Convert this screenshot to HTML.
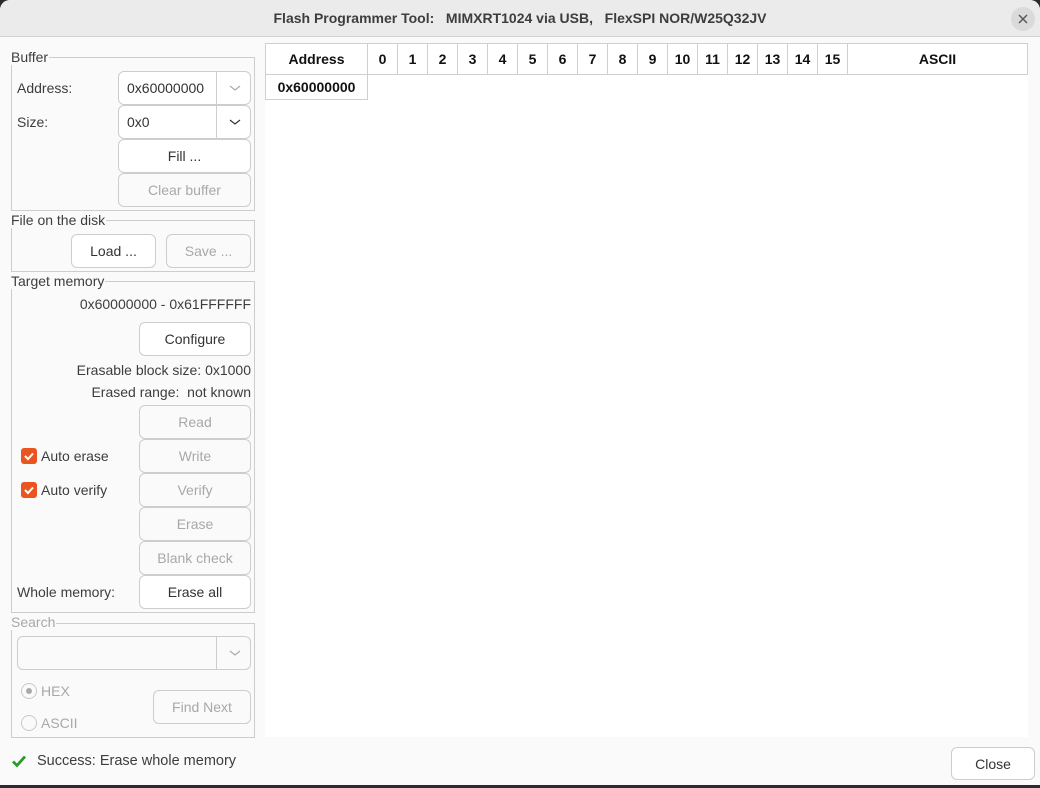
<!DOCTYPE html>
<html><head><meta charset="utf-8"><style>
*{box-sizing:border-box;margin:0;padding:0}
body{width:1040px;height:788px;background:#2b2b2b;position:relative;overflow:hidden;font-family:"Liberation Sans",sans-serif;font-size:14px;color:#333}
.win{position:absolute;left:0;top:0;width:1040px;height:785px;background:#fafafa;border-radius:10px 10px 0 0;overflow:hidden}
.hdr{position:absolute;left:0;top:0;width:1040px;height:37px;background:#ebebeb;border-bottom:1px solid #cfcfcf;text-align:center;line-height:37px;font-weight:bold;font-size:14px;color:#3d3d3d}
.x{position:absolute;left:1011px;top:7px;width:24px;height:24px;border-radius:12px;background:#dadada}
.a{position:absolute}
.grp{position:absolute;border:1px solid #cdcdcd;left:11px;width:244px}
.gt{position:absolute;left:11px;font-size:14px;color:#3d3d3d;background:#fafafa;padding-right:1px;line-height:16px}
.btn{position:absolute;border:1px solid #cdcdcd;border-radius:6px;background:#fff;text-align:center;font-size:14px;color:#333;height:34px;line-height:32px}
.dis{color:#a8a8a8;background:#fafafa}
.lbl{position:absolute;font-size:14px;color:#3d3d3d;line-height:16px}
.r{text-align:right}
.cb{position:absolute;width:16px;height:16px;border-radius:3px;background:#e95420}
.cb svg{position:absolute;left:0;top:0}
.tbl{position:absolute;left:265px;top:43px;width:763px;height:694px;background:#fff}
.th{position:absolute;top:0;height:32px;border-right:1px solid #cfcfcf;border-bottom:1px solid #cfcfcf;border-top:1px solid #cfcfcf;text-align:center;line-height:30px;font-weight:bold;color:#111;font-size:14px}
.sep{position:absolute;top:0;width:1px;height:32px;background:#cdcdcd}
.chev{position:absolute;top:12px}
</style></head><body>
<div class="win">
<div class="hdr">Flash Programmer Tool:&nbsp;&nbsp; MIMXRT1024 via USB,&nbsp;&nbsp; FlexSPI NOR/W25Q32JV<div class="x"><svg class="a" style="left:7px;top:7px" width="10" height="10"><path d="M1 1l8 8M9 1l-8 8" stroke="#555" stroke-width="1.4"/></svg></div></div>

<div class="tbl">
<div class="th" style="left:0;width:103px;border-left:1px solid #cfcfcf">Address</div>
<div class="th" style="left:103px;width:30px">0</div>
<div class="th" style="left:133px;width:30px">1</div>
<div class="th" style="left:163px;width:30px">2</div>
<div class="th" style="left:193px;width:30px">3</div>
<div class="th" style="left:223px;width:30px">4</div>
<div class="th" style="left:253px;width:30px">5</div>
<div class="th" style="left:283px;width:30px">6</div>
<div class="th" style="left:313px;width:30px">7</div>
<div class="th" style="left:343px;width:30px">8</div>
<div class="th" style="left:373px;width:30px">9</div>
<div class="th" style="left:403px;width:30px">10</div>
<div class="th" style="left:433px;width:30px">11</div>
<div class="th" style="left:463px;width:30px">12</div>
<div class="th" style="left:493px;width:30px">13</div>
<div class="th" style="left:523px;width:30px">14</div>
<div class="th" style="left:553px;width:30px">15</div>
<div class="th" style="left:583px;width:180px">ASCII</div>
<div class="th" style="left:0;top:32px;width:103px;height:25px;line-height:24px;border-top:none;border-left:1px solid #cfcfcf">0x60000000</div>
</div>

<!-- Buffer -->
<div class="grp" style="top:57px;height:154px"></div>
<div class="gt" style="top:49px">Buffer</div>
<div class="lbl" style="left:17px;top:80px">Address:</div>
<div class="btn" style="left:118px;top:71px;width:133px;text-align:left;padding-left:8px">0x60000000<div class="sep" style="left:97px"></div><svg class="chev" style="left:110px" width="12" height="8"><path d="M1 2l5 4 5-4" stroke="#aaa" stroke-width="1.2" fill="none"/></svg></div>
<div class="lbl" style="left:17px;top:114px">Size:</div>
<div class="btn" style="left:118px;top:105px;width:133px;text-align:left;padding-left:8px">0x0<div class="sep" style="left:97px"></div><svg class="chev" style="left:110px" width="12" height="8"><path d="M1 2l5 4 5-4" stroke="#333" stroke-width="1.2" fill="none"/></svg></div>
<div class="btn" style="left:118px;top:139px;width:133px">Fill ...</div>
<div class="btn dis" style="left:118px;top:173px;width:133px">Clear buffer</div>

<!-- File -->
<div class="grp" style="top:220px;height:52px"></div>
<div class="gt" style="top:212px">File on the disk</div>
<div class="btn" style="left:71px;top:234px;width:85px">Load ...</div>
<div class="btn dis" style="left:166px;top:234px;width:85px">Save ...</div>

<!-- Target -->
<div class="grp" style="top:281px;height:332px"></div>
<div class="gt" style="top:273px">Target memory</div>
<div class="lbl r" style="left:20px;width:231px;top:296px">0x60000000 - 0x61FFFFFF</div>
<div class="btn" style="left:139px;top:322px;width:112px">Configure</div>
<div class="lbl r" style="left:20px;width:231px;top:362px">Erasable block size: 0x1000</div>
<div class="lbl r" style="left:20px;width:231px;top:384px">Erased range:&nbsp; not known</div>
<div class="btn dis" style="left:139px;top:405px;width:112px">Read</div>
<div class="btn dis" style="left:139px;top:439px;width:112px">Write</div>
<div class="btn dis" style="left:139px;top:473px;width:112px">Verify</div>
<div class="btn dis" style="left:139px;top:507px;width:112px">Erase</div>
<div class="btn dis" style="left:139px;top:541px;width:112px">Blank check</div>
<div class="btn" style="left:139px;top:575px;width:112px">Erase all</div>
<div class="cb" style="left:21px;top:448px"><svg width="16" height="16"><path d="M4 8l3 3 5-5.5" stroke="#fff" stroke-width="2" fill="none"/></svg></div>
<div class="lbl" style="left:41px;top:448px">Auto erase</div>
<div class="cb" style="left:21px;top:482px"><svg width="16" height="16"><path d="M4 8l3 3 5-5.5" stroke="#fff" stroke-width="2" fill="none"/></svg></div>
<div class="lbl" style="left:41px;top:482px">Auto verify</div>
<div class="lbl" style="left:17px;top:584px">Whole memory:</div>

<!-- Search -->
<div class="grp" style="top:623px;height:115px;border-bottom:1px solid #cdcdcd"></div>
<div class="gt" style="top:614px;color:#a8a8a8">Search</div>
<div class="btn dis" style="left:17px;top:636px;width:234px"><div class="sep" style="left:198px"></div><svg class="chev" style="left:211px" width="12" height="8"><path d="M1 2l5 4 5-4" stroke="#aaa" stroke-width="1.2" fill="none"/></svg></div>
<div class="a" style="left:21px;top:683px;width:16px;height:16px;border:1px solid #c8c8c8;border-radius:8px;background:#fafafa"><div class="a" style="left:4px;top:4px;width:6px;height:6px;border-radius:3px;background:#aaa"></div></div>
<div class="lbl" style="left:41px;top:683px;color:#a8a8a8">HEX</div>
<div class="a" style="left:21px;top:715px;width:16px;height:16px;border:1px solid #c8c8c8;border-radius:8px;background:#fafafa"></div>
<div class="lbl" style="left:41px;top:715px;color:#a8a8a8">ASCII</div>
<div class="btn dis" style="left:153px;top:690px;width:98px">Find Next</div>

<!-- status -->
<svg class="a" style="left:11px;top:753px" width="16" height="16"><path d="M2 8.5l4 4 8-9" stroke="#2a9a2a" stroke-width="2.8" fill="none"/></svg>
<div class="lbl" style="left:37px;top:753px;font-size:14.5px">Success: Erase whole memory</div>
<div class="btn" style="left:951px;top:747px;width:84px;height:33px">Close</div>
</div>
</body></html>
